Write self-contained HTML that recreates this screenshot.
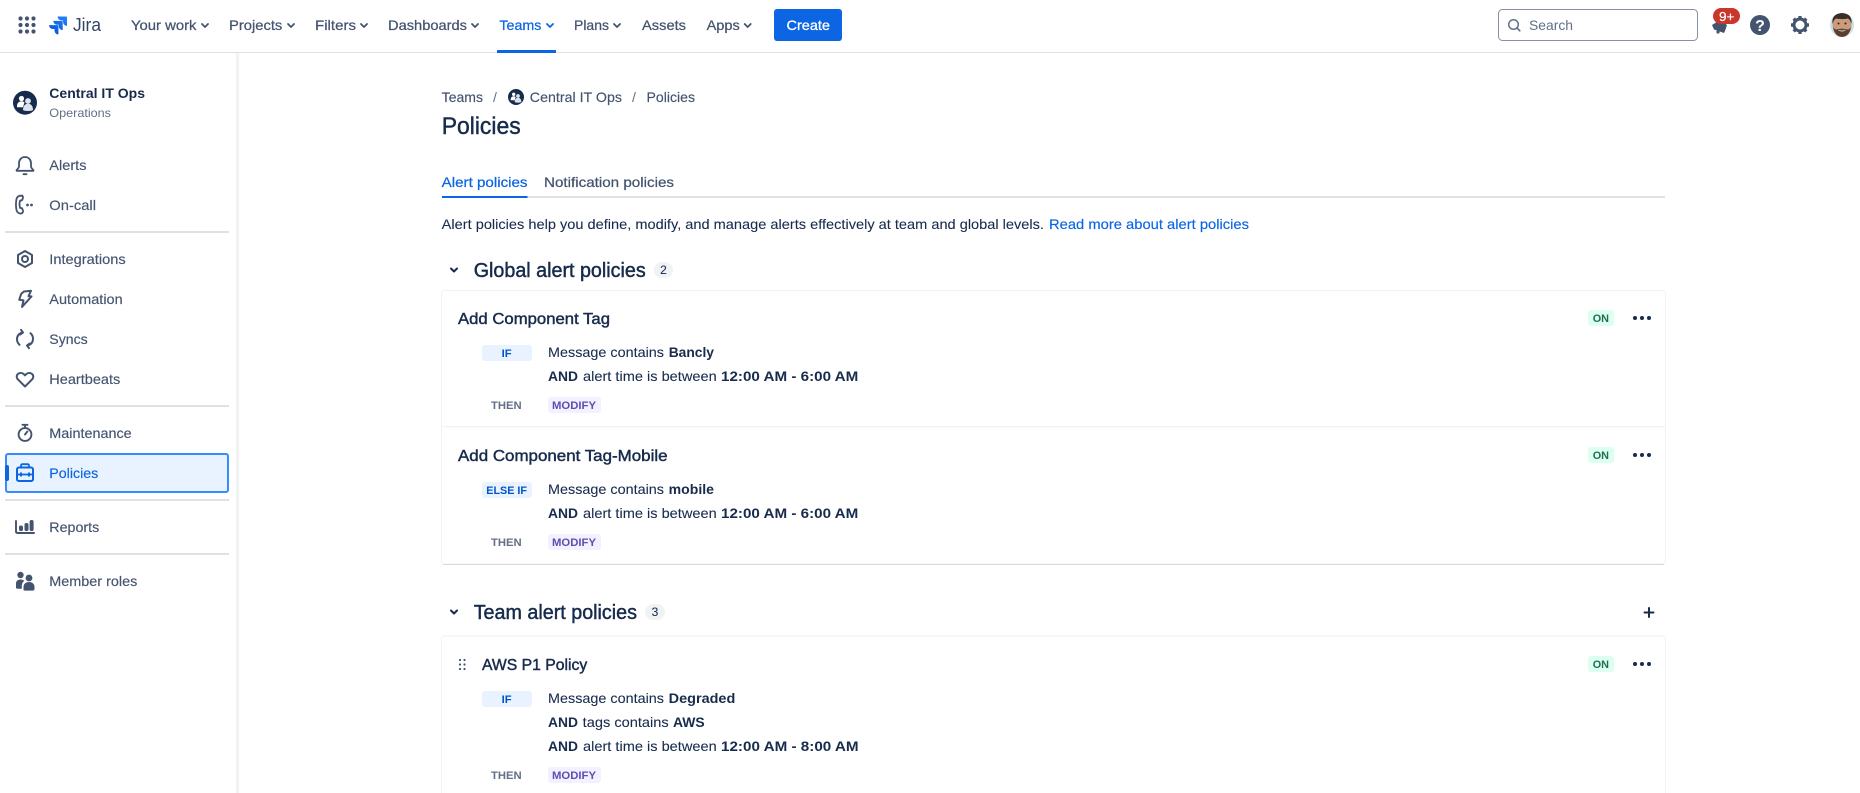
<!DOCTYPE html>
<html lang="en">
<head>
<meta charset="utf-8">
<title>Policies - Central IT Ops</title>
<style>
html,body{margin:0;padding:0;background:#fff;width:1860px;height:793px;overflow:hidden}
svg{display:block}
text{font-family:"Liberation Sans",Arial,sans-serif;font-size:14px;white-space:pre}
.n{fill:#44546F;stroke:#44546F;stroke-width:.25}
.s{fill:#44546F;stroke:#44546F;stroke-width:.15}
.d{fill:#172B4D;stroke:#172B4D;stroke-width:.08}
.dm{fill:#172B4D;stroke:#172B4D;stroke-width:.45}
.b{fill:#172B4D;font-weight:700}
.bl{fill:#0C66E4;stroke:#0C66E4;stroke-width:.25}
.tag{font-size:11px;font-weight:700}
.ic{fill:none;stroke:#44546F;stroke-width:1.8;stroke-linecap:round;stroke-linejoin:round}
.chev{fill:none;stroke:#44546F;stroke-width:1.8;stroke-linecap:round;stroke-linejoin:round}
</style>
</head>
<body>
<svg xmlns="http://www.w3.org/2000/svg" width="1860" height="793" viewBox="0 0 1860 793">
<defs>
<linearGradient id="jg" x1="1" y1="0" x2="0" y2="1"><stop offset="0" stop-color="#2684FF"/><stop offset="1" stop-color="#0052CC"/></linearGradient>
<clipPath id="av"><circle cx="1842" cy="25" r="12"/></clipPath>
</defs>
<rect width="1860" height="793" fill="#fff"/>

<!-- Top nav -->
<rect x="0" y="52" width="1860" height="1" fill="#DFE1E6"/>
<g fill="#44546F">
<circle cx="20.500" cy="18.500" r="2.100"/><circle cx="27" cy="18.500" r="2.100"/><circle cx="33.500" cy="18.500" r="2.100"/>
<circle cx="20.500" cy="25" r="2.100"/><circle cx="27" cy="25" r="2.100"/><circle cx="33.500" cy="25" r="2.100"/>
<circle cx="20.500" cy="31.500" r="2.100"/><circle cx="27" cy="31.500" r="2.100"/><circle cx="33.500" cy="31.500" r="2.100"/>
</g>
<path transform="translate(49 16.500) scale(.75)" fill="url(#jg)" d="M11.571 11.513H0a5.218 5.218 0 0 0 5.232 5.215h2.13v2.057A5.215 5.215 0 0 0 12.575 24V12.518a1.005 1.005 0 0 0-1.005-1.005zm5.723-5.756H5.736a5.215 5.215 0 0 0 5.215 5.214h2.129v2.058a5.218 5.218 0 0 0 5.215 5.214V6.758a1.001 1.001 0 0 0-1.001-1.001zM23.013 0H11.455a5.215 5.215 0 0 0 5.215 5.215h2.129v2.057A5.215 5.215 0 0 0 24 12.483V1.005A1.001 1.001 0 0 0 23.013 0Z"/>
<text x="73" y="31" style="font-size:18px" fill="#344563" textLength="28" lengthAdjust="spacingAndGlyphs">Jira</text>

<text class="n" x="131" y="30" textLength="65.500" lengthAdjust="spacingAndGlyphs">Your work</text>
<path class="chev" d="M202 24l3 3 3-3"/>
<text class="n" x="229" y="30" textLength="53.300" lengthAdjust="spacingAndGlyphs">Projects</text>
<path class="chev" d="M288 24l3 3 3-3"/>
<text class="n" x="315" y="30" textLength="41" lengthAdjust="spacingAndGlyphs">Filters</text>
<path class="chev" d="M361 24l3 3 3-3"/>
<text class="n" x="388" y="30" textLength="79" lengthAdjust="spacingAndGlyphs">Dashboards</text>
<path class="chev" d="M472 24l3 3 3-3"/>
<text class="bl" x="499.400" y="30" textLength="42" lengthAdjust="spacingAndGlyphs">Teams</text>
<path class="chev" style="stroke:#0C66E4" d="M547 24l3 3 3-3"/>
<rect x="497" y="50" width="59" height="3" fill="#0C66E4"/>
<text class="n" x="574" y="30" textLength="35" lengthAdjust="spacingAndGlyphs">Plans</text>
<path class="chev" d="M614 24l3 3 3-3"/>
<text class="n" x="642" y="30" textLength="44" lengthAdjust="spacingAndGlyphs">Assets</text>
<text class="n" x="706.600" y="30" textLength="33.200" lengthAdjust="spacingAndGlyphs">Apps</text>
<path class="chev" d="M744.700 24l3 3 3-3"/>
<rect x="774" y="9" width="68" height="32" rx="3" fill="#0C66E4"/>
<text x="786.500" y="30" fill="#fff" stroke="#fff" stroke-width=".3" textLength="43.500" lengthAdjust="spacingAndGlyphs">Create</text>

<rect x="1498.500" y="9.500" width="199" height="31" rx="4" fill="#fff" stroke="#8590A2"/>
<circle cx="1513.500" cy="24.500" r="4.800" fill="none" stroke="#626F86" stroke-width="1.500"/>
<path d="M1517 28l2.800 2.800" stroke="#626F86" stroke-width="1.600" stroke-linecap="round"/>
<text x="1529" y="30" fill="#626F86" textLength="44" lengthAdjust="spacingAndGlyphs">Search</text>

<path d="M1712 25l8-5 7 5-2 6-1 2-10-3.500z" fill="#44546F"/>
<circle cx="1718" cy="32" r="1.600" fill="#44546F"/>
<rect x="1713" y="8" width="27" height="16" rx="8" fill="#C9372C"/>
<text x="1719" y="21" fill="#fff" stroke="#fff" stroke-width=".2" style="font-size:13px" textLength="15.500" lengthAdjust="spacingAndGlyphs">9+</text>
<circle cx="1760" cy="25" r="10" fill="#44546F"/>
<text x="1760" y="31" fill="#fff" text-anchor="middle" style="font-size:16px;font-weight:700">?</text>
<g fill="#44546F">
<circle cx="1800" cy="25" r="6" fill="none" stroke="#44546F" stroke-width="3"/>
<rect x="1798.300" y="16" width="3.400" height="3" rx=".6"/><rect x="1798.300" y="31" width="3.400" height="3" rx=".6"/>
<rect x="1798.300" y="16" width="3.400" height="3" rx=".6" transform="rotate(45 1800 25)"/><rect x="1798.300" y="31" width="3.400" height="3" rx=".6" transform="rotate(45 1800 25)"/>
<rect x="1798.300" y="16" width="3.400" height="3" rx=".6" transform="rotate(90 1800 25)"/><rect x="1798.300" y="31" width="3.400" height="3" rx=".6" transform="rotate(90 1800 25)"/>
<rect x="1798.300" y="16" width="3.400" height="3" rx=".6" transform="rotate(135 1800 25)"/><rect x="1798.300" y="31" width="3.400" height="3" rx=".6" transform="rotate(135 1800 25)"/>
</g>
<g clip-path="url(#av)">
<rect x="1830" y="13" width="24" height="24" fill="#C9E0EC"/>
<ellipse cx="1842" cy="25" rx="9.500" ry="11.500" fill="#CC9A7C"/>
<path d="M1832.500 24c-1-8 4-11 9.500-11s10.500 3 9.500 11c-1-3-2-5-4-5.500-3 .8-8 .8-11 0-2 .5-3 2.500-4 5.500z" fill="#3A2E26"/>
<path d="M1833 27c1 6 4 10 9 10s8-4 9-10c-1 1.500-2 2.500-3.500 2.500-3-1-8-1-11 0-1.500 0-2.500-1-3.500-2.500z" fill="#5A4030"/>
<path d="M1838 29.500c2 1.500 6 1.500 8 0-1 2.500-7 2.500-8 0z" fill="#fff"/>
<circle cx="1838.500" cy="23.500" r="1" fill="#2E2520"/><circle cx="1845.500" cy="23.500" r="1" fill="#2E2520"/>
</g>

<!-- Sidebar -->
<rect x="236" y="53" width="3" height="740" fill="#F1F2F4"/>
<circle cx="25" cy="102.700" r="12" fill="#172B4D"/>
<g fill="#fff">
<circle cx="21.500" cy="98.500" r="2.600"/><path d="M17 106c0-3 2-4.800 4.500-4.800 1.300 0 2.200.4 3 1l-1.500 5h-6z"/>
<circle cx="28" cy="101" r="2.900" fill="#DDE3EC"/><path d="M23 110c0-4 2-6.300 5-6.300s5 2.300 5 6.300c-1.300 1.300-8.700 1.300-10 0z" fill="#DDE3EC"/>
</g>
<text class="b" x="49.300" y="98" textLength="95.700" lengthAdjust="spacingAndGlyphs">Central IT Ops</text>
<text x="49.300" y="117" fill="#626F86" style="font-size:12px" textLength="61.700" lengthAdjust="spacingAndGlyphs">Operations</text>

<path class="ic" d="M25 157c-3.700 0-6 2.900-6 6.200v3.300c0 1.300-1.300 2.500-2.400 3.500v.8h16.800V170c-1.100-1-2.400-2.200-2.400-3.500v-3.300c0-3.300-2.300-6.200-6-6.200z"/>
<path class="ic" d="M23.500 174.200h3"/>
<text class="s" x="49.300" y="170" textLength="37.200" lengthAdjust="spacingAndGlyphs">Alerts</text>

<path class="ic" d="M22 196c-2-1-5 .5-5.500 3-.7 3.500-.7 7.500 0 11 .5 2.700 3.500 4.200 5.500 3.200 1.200-.8 1.200-2.300.6-3.700-.5-1.300-1.300-1.800-2.500-1.500-.8-2-.8-5.500 0-7.500 1.200.3 2-.2 2.500-1.500.6-1.400.6-2.700-.6-3.500z"/>
<circle cx="27.500" cy="205" r="1.400" fill="#44546F"/><circle cx="31.500" cy="205" r="1.400" fill="#44546F"/>
<text class="s" x="49.300" y="210" textLength="46.700" lengthAdjust="spacingAndGlyphs">On-call</text>
<rect x="5" y="231" width="224" height="2" fill="#DFE1E6"/>

<path class="ic" style="stroke-width:2" d="M25 251l7 4v8l-7 4-7-4v-8z"/>
<circle cx="25" cy="259" r="3" class="ic" style="stroke-width:2"/>
<text class="s" x="49.300" y="264" textLength="76.400" lengthAdjust="spacingAndGlyphs">Integrations</text>

<path class="ic" style="stroke-width:2" d="M24 291.500l7-.8-2.500 5.500 3 .2-9.500 10.500 1.500-6.500-4.300-.6 2-6z"/>
<text class="s" x="49.300" y="304" textLength="73.400" lengthAdjust="spacingAndGlyphs">Automation</text>

<path class="ic" style="stroke-width:2" d="M22.500 332.500c-3.500 1-5.500 3.500-5.500 6.800 0 2.200.8 4 2.500 5.500M21 329.800l2 2.700-2.800 2"/>
<path class="ic" style="stroke-width:2" d="M27.500 345.500c3.500-1 5.500-3.500 5.500-6.800 0-2.200-.8-4-2.500-5.500M29 348.200l-2-2.700 2.800-2"/>
<text class="s" x="49.300" y="344" textLength="38.400" lengthAdjust="spacingAndGlyphs">Syncs</text>

<path class="ic" style="stroke-width:2" d="M25 386.500l-6.800-6.800c-2-2-1.900-4.500 0-5.900 2-1.400 4.700-1 6.800 1.600 2.100-2.600 4.800-3 6.800-1.600 1.900 1.400 2 3.900 0 5.900z"/>
<text class="s" x="49.300" y="384" textLength="71" lengthAdjust="spacingAndGlyphs">Heartbeats</text>
<rect x="5" y="405" width="224" height="2" fill="#DFE1E6"/>

<circle cx="25" cy="434.500" r="6.400" class="ic" style="stroke-width:1.900"/>
<path class="ic" style="stroke-width:1.900" d="M22.500 424.800h5M25 425v3M25 434.500l2.400-3"/>
<text class="s" x="49.300" y="438" textLength="82.400" lengthAdjust="spacingAndGlyphs">Maintenance</text>

<rect x="6" y="454" width="222" height="38" rx="2" fill="#E9F2FF" stroke="#388BFF" stroke-width="2"/>
<rect x="5" y="465" width="4" height="16" rx="2" fill="#0C66E4"/>
<rect x="17" y="467.500" width="16" height="13.500" rx="1.800" fill="none" stroke="#0C66E4" stroke-width="2"/>
<path d="M21 467v-1.200c0-1 .6-1.600 1.600-1.600h4.800c1 0 1.600.6 1.600 1.600v1.200" fill="none" stroke="#0C66E4" stroke-width="1.800"/>
<path d="M17 474.500h16" stroke="#0C66E4" stroke-width="1.800"/>
<rect x="20" y="472.500" width="2" height="4" fill="#0C66E4"/><rect x="28" y="472.500" width="2" height="4" fill="#0C66E4"/>
<text x="49.300" y="478" fill="#0C66E4" stroke="#0C66E4" stroke-width=".15" textLength="49" lengthAdjust="spacingAndGlyphs">Policies</text>
<rect x="5" y="499" width="224" height="2" fill="#DFE1E6"/>

<path class="ic" style="stroke-width:1.900" d="M16 521v10.500c0 1 .6 1.500 1.500 1.500H34"/>
<g fill="#44546F">
<rect x="19" y="525.500" width="4" height="5.500" rx="1.800"/><rect x="24.500" y="523" width="4" height="8" rx="1.800"/><rect x="29.600" y="520" width="4" height="11" rx="1.800"/>
</g>
<text class="s" x="49.300" y="532" textLength="50" lengthAdjust="spacingAndGlyphs">Reports</text>
<rect x="5" y="553" width="224" height="2" fill="#DFE1E6"/>

<g fill="#44546F">
<circle cx="20.500" cy="575" r="3.200"/><path d="M16 588v-4.500c0-2.500 1.800-4 4.500-4 1.700 0 2.900.5 3.700 1.400-1.600 1.200-2.400 3-2.400 5.200v2.600h-3.900c-1.200 0-1.900-.7-1.900-.7z"/>
<circle cx="29" cy="578" r="3.400"/><path d="M23.500 590v-3c0-3 2.200-5 5.500-5s5.500 2 5.500 5v2c0 1-.7 1.600-1.700 1.600h-7.800c-1 0-1.500-.2-1.500-.6z"/>
</g>
<text class="s" x="49.300" y="586" textLength="88" lengthAdjust="spacingAndGlyphs">Member roles</text>

<!-- Header area -->
<text class="s" x="441.700" y="102" textLength="41.300" lengthAdjust="spacingAndGlyphs">Teams</text>
<text x="493" y="102" fill="#626F86">/</text>
<circle cx="516" cy="97" r="8" fill="#172B4D"/>
<g fill="#fff"><circle cx="513.700" cy="94.300" r="1.700"/><path d="M510.700 99.500c0-2 1.300-3.200 3-3.200.9 0 1.500.3 2 .7l-1 3.300h-4z"/><circle cx="518" cy="96" r="1.900" fill="#DDE3EC"/><path d="M514.700 102c0-2.700 1.300-4.200 3.300-4.200s3.300 1.500 3.300 4.200c-.9.900-5.700.9-6.600 0z" fill="#DDE3EC"/></g>
<text class="s" x="529.800" y="102" textLength="92.200" lengthAdjust="spacingAndGlyphs">Central IT Ops</text>
<text x="632" y="102" fill="#626F86">/</text>
<text class="s" x="646.500" y="102" textLength="48.500" lengthAdjust="spacingAndGlyphs">Policies</text>
<text class="dm" x="441.700" y="134" style="font-size:24px" textLength="79" lengthAdjust="spacingAndGlyphs">Policies</text>

<rect x="442" y="196" width="1223" height="2" fill="#DFE1E6"/>
<rect x="442" y="196" width="85.500" height="2" fill="#0C66E4"/>
<text class="bl" x="441.700" y="187" textLength="85.800" lengthAdjust="spacingAndGlyphs">Alert policies</text>
<text class="n" x="544" y="187" textLength="130" lengthAdjust="spacingAndGlyphs">Notification policies</text>
<text class="d" x="441.700" y="229" textLength="602.300" lengthAdjust="spacingAndGlyphs">Alert policies help you define, modify, and manage alerts effectively at team and global levels.</text>
<text x="1049" y="229" fill="#0C66E4" stroke="#0C66E4" stroke-width=".15" textLength="200" lengthAdjust="spacingAndGlyphs">Read more about alert policies</text>

<!-- Global section -->
<path d="M451 268.500l3 3 3-3" fill="none" stroke="#172B4D" stroke-width="2" stroke-linecap="round" stroke-linejoin="round"/>
<text class="dm" x="473.700" y="277" style="font-size:20px" textLength="172" lengthAdjust="spacingAndGlyphs">Global alert policies</text>
<rect x="654" y="262" width="19" height="16" rx="8" fill="#F1F2F4"/>
<text class="d" x="663.500" y="274" text-anchor="middle" style="font-size:12px">2</text>

<rect x="441.500" y="290.500" width="1224" height="273.500" rx="3" fill="#fff" stroke="#F1F2F4"/>
<path d="M443 564.500h1221" stroke="#D5D9E0" stroke-width="1"/>
<rect x="442" y="426" width="1223" height="1.200" fill="#F1F2F4"/>

<text class="dm" x="458" y="324" style="font-size:16px" textLength="152" lengthAdjust="spacingAndGlyphs">Add Component Tag</text>
<rect x="482" y="345" width="50" height="16" rx="3" fill="#E9F2FF"/>
<text class="tag" x="501.700" y="357" fill="#0055CC" textLength="10" lengthAdjust="spacingAndGlyphs">IF</text>
<text class="d" x="548" y="357" textLength="116" lengthAdjust="spacingAndGlyphs">Message contains</text>
<text class="b" x="668.700" y="357" textLength="45.300" lengthAdjust="spacingAndGlyphs">Bancly</text>
<text class="b" x="548" y="381" textLength="30" lengthAdjust="spacingAndGlyphs">AND</text>
<text class="d" x="583" y="381" textLength="133.700" lengthAdjust="spacingAndGlyphs">alert time is between</text>
<text class="b" x="721" y="381" textLength="137.300" lengthAdjust="spacingAndGlyphs">12:00 AM - 6:00 AM</text>
<text class="tag" x="491" y="409" fill="#626F86" textLength="30.700" lengthAdjust="spacingAndGlyphs">THEN</text>
<rect x="548" y="397" width="53" height="16" rx="3" fill="#F3F0FF"/>
<text class="tag" x="552" y="409" fill="#5E4DB2" textLength="44" lengthAdjust="spacingAndGlyphs">MODIFY</text>
<rect x="1588" y="310" width="26" height="16" rx="3" fill="#DCFFF1"/>
<text class="tag" x="1592.700" y="322" fill="#216E4E" textLength="16.300" lengthAdjust="spacingAndGlyphs">ON</text>
<g fill="#172B4D"><circle cx="1635" cy="318" r="2"/><circle cx="1642" cy="318" r="2"/><circle cx="1649" cy="318" r="2"/></g>

<text class="dm" x="458" y="461" style="font-size:16px" textLength="209.500" lengthAdjust="spacingAndGlyphs">Add Component Tag-Mobile</text>
<rect x="482" y="482" width="50" height="16" rx="3" fill="#E9F2FF"/>
<text class="tag" x="486.300" y="494" fill="#0055CC" textLength="40.700" lengthAdjust="spacingAndGlyphs">ELSE IF</text>
<text class="d" x="548" y="494" textLength="116" lengthAdjust="spacingAndGlyphs">Message contains</text>
<text class="b" x="668.700" y="494" textLength="45.300" lengthAdjust="spacingAndGlyphs">mobile</text>
<text class="b" x="548" y="518" textLength="30" lengthAdjust="spacingAndGlyphs">AND</text>
<text class="d" x="583" y="518" textLength="133.700" lengthAdjust="spacingAndGlyphs">alert time is between</text>
<text class="b" x="721" y="518" textLength="137.300" lengthAdjust="spacingAndGlyphs">12:00 AM - 6:00 AM</text>
<text class="tag" x="491" y="546" fill="#626F86" textLength="30.700" lengthAdjust="spacingAndGlyphs">THEN</text>
<rect x="548" y="534" width="53" height="16" rx="3" fill="#F3F0FF"/>
<text class="tag" x="552" y="546" fill="#5E4DB2" textLength="44" lengthAdjust="spacingAndGlyphs">MODIFY</text>
<rect x="1588" y="447" width="26" height="16" rx="3" fill="#DCFFF1"/>
<text class="tag" x="1592.700" y="459" fill="#216E4E" textLength="16.300" lengthAdjust="spacingAndGlyphs">ON</text>
<g fill="#172B4D"><circle cx="1635" cy="455" r="2"/><circle cx="1642" cy="455" r="2"/><circle cx="1649" cy="455" r="2"/></g>

<!-- Team section -->
<path d="M451 610.500l3 3 3-3" fill="none" stroke="#172B4D" stroke-width="2" stroke-linecap="round" stroke-linejoin="round"/>
<text class="dm" x="473.700" y="619" style="font-size:20px" textLength="163.300" lengthAdjust="spacingAndGlyphs">Team alert policies</text>
<rect x="645" y="604" width="20" height="16" rx="8" fill="#F1F2F4"/>
<text class="d" x="655" y="616" text-anchor="middle" style="font-size:12px">3</text>
<path d="M1649 608v9M1644.500 612.500h9" stroke="#172B4D" stroke-width="2" stroke-linecap="round"/>

<path d="M441.500 800V639c0-1.700 1.300-3 3-3h1218c1.700 0 3 1.300 3 3v161" fill="#fff" stroke="#F1F2F4"/>
<g fill="#44546F"><circle cx="460" cy="660" r="1.100"/><circle cx="464.500" cy="660" r="1.100"/><circle cx="460" cy="664.500" r="1.100"/><circle cx="464.500" cy="664.500" r="1.100"/><circle cx="460" cy="669" r="1.100"/><circle cx="464.500" cy="669" r="1.100"/></g>
<text class="dm" x="482" y="670" style="font-size:16px" textLength="105.300" lengthAdjust="spacingAndGlyphs">AWS P1 Policy</text>
<rect x="482" y="691" width="50" height="16" rx="3" fill="#E9F2FF"/>
<text class="tag" x="501.700" y="703" fill="#0055CC" textLength="10" lengthAdjust="spacingAndGlyphs">IF</text>
<text class="d" x="548" y="703" textLength="116" lengthAdjust="spacingAndGlyphs">Message contains</text>
<text class="b" x="668.700" y="703" textLength="66.600" lengthAdjust="spacingAndGlyphs">Degraded</text>
<text class="b" x="548" y="727" textLength="30" lengthAdjust="spacingAndGlyphs">AND</text>
<text class="d" x="582.700" y="727" textLength="86" lengthAdjust="spacingAndGlyphs">tags contains</text>
<text class="b" x="673" y="727" textLength="31.700" lengthAdjust="spacingAndGlyphs">AWS</text>
<text class="b" x="548" y="751" textLength="30" lengthAdjust="spacingAndGlyphs">AND</text>
<text class="d" x="583" y="751" textLength="133.700" lengthAdjust="spacingAndGlyphs">alert time is between</text>
<text class="b" x="721" y="751" textLength="137.600" lengthAdjust="spacingAndGlyphs">12:00 AM - 8:00 AM</text>
<text class="tag" x="491" y="779" fill="#626F86" textLength="30.700" lengthAdjust="spacingAndGlyphs">THEN</text>
<rect x="548" y="767" width="53" height="16" rx="3" fill="#F3F0FF"/>
<text class="tag" x="552" y="779" fill="#5E4DB2" textLength="44" lengthAdjust="spacingAndGlyphs">MODIFY</text>
<rect x="1588" y="656" width="26" height="16" rx="3" fill="#DCFFF1"/>
<text class="tag" x="1592.700" y="668" fill="#216E4E" textLength="16.300" lengthAdjust="spacingAndGlyphs">ON</text>
<g fill="#172B4D"><circle cx="1635" cy="664" r="2"/><circle cx="1642" cy="664" r="2"/><circle cx="1649" cy="664" r="2"/></g>
</svg>
</body>
</html>
